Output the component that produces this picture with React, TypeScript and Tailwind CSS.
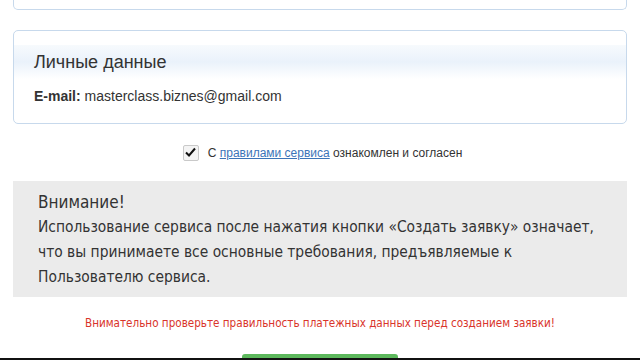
import React from 'react';

const arial = { fontFamily: '"Liberation Sans", Arial, sans-serif' };
const tahoma = { fontFamily: '"DejaVu Sans Condensed", "DejaVu Sans", sans-serif' };

const App: React.FC = () => {
  return (
    <div className="w-[640px] h-[360px] overflow-hidden bg-white flex flex-col" style={arial}>
      <div className="mx-[13px] h-[11px] -mt-px shrink-0 border border-t-0 border-[#c7d9ec] rounded-b-[5px] bg-white" />

      <div className="mx-[13px] mt-[20px] h-[94px] shrink-0 border border-[#c7d9ec] rounded-[5px] bg-white pt-[14px]">
        <div className="h-[34px] flex items-center px-[20px] bg-gradient-to-b from-[#f7fafd] via-[#eaf2fb] to-white">
          <h2 className="text-[18px] text-[#333] leading-none">Личные данные</h2>
        </div>
        <div className="px-[20px] mt-[10px] text-[14px] text-[#333] leading-none">
          <span className="font-bold">E-mail:</span> masterclass.biznes@gmail.com
        </div>
      </div>

      <div className="mt-[20px] h-[17px] shrink-0 flex items-center justify-center gap-[9px] pl-[5px] text-[12px] text-[#333]">
        <span className="w-[16px] h-[16px] border border-[#c9c9c9] rounded-[2px] bg-[#f4f4f4] flex items-center justify-center">
          <svg width="13" height="13" viewBox="0 0 13 13">
            <path d="M2 6.5 L5 9.5 L11 2.5" stroke="#111" strokeWidth="2" fill="none" />
          </svg>
        </span>
        <span>
          С <a className="text-[#3b74b8] underline">правилами сервиса</a> ознакомлен и согласен
        </span>
      </div>

      <div className="mx-[13px] mt-[20px] h-[116px] shrink-0 bg-[#ebebeb] px-[25px] pt-[11px] text-[#333]" style={tahoma}>
        <div className="text-[17px] leading-[20px]">Внимание!</div>
        <p className="mt-[3px] text-[15.4px] leading-[25px]">
          Использование сервиса после нажатия кнопки «Создать заявку» означает,
          <br />
          что вы принимаете все основные требования, предъявляемые к
          <br />
          Пользователю сервиса.
        </p>
      </div>

      <div className="mt-[19px] text-center text-[11.6px] text-[#d9342b] leading-[14px]" style={tahoma}>
        Внимательно проверьте правильность платежных данных перед созданием заявки!
      </div>

      <div className="mt-auto flex flex-col">
        <div className="flex justify-center">
          <div className="w-[156px] h-[4px] rounded-t-[3px] bg-[#5cb85c]" />
        </div>
        <div className="h-[2px] bg-[#111]" />
      </div>
    </div>
  );
};

export default App;
